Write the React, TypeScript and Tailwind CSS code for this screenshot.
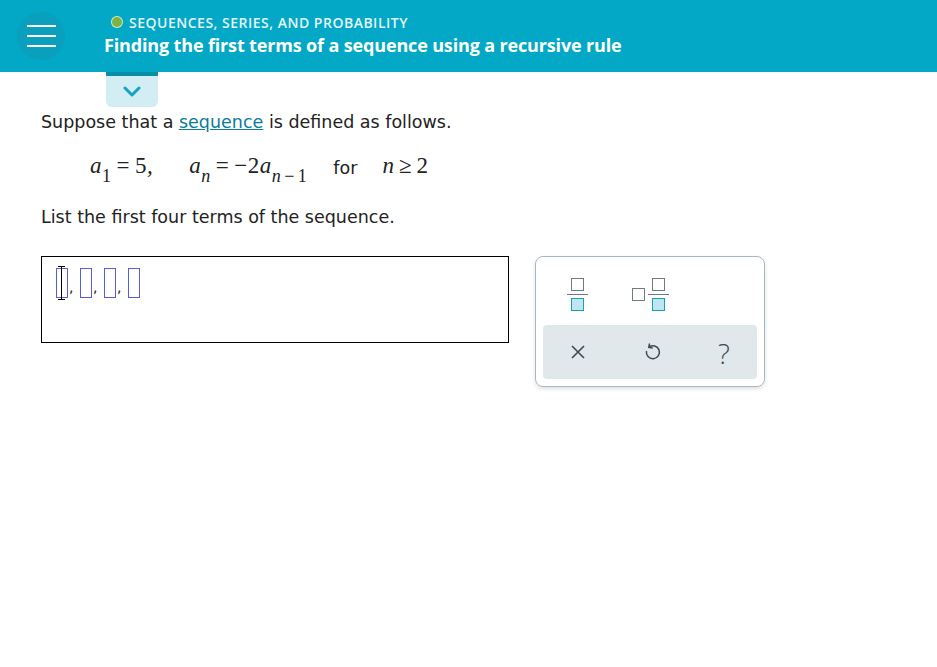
import React from 'react';

const Box = ({ filled }: { filled?: boolean }) => (
    <span className={`block w-[13px] h-[13px] border-[1.5px] ${filled ? 'border-[#14a0b5] bg-[#bfe6f0]' : 'border-[#6f7b80] bg-white'}`} />
);

const Frac = () => (
    <span className="flex flex-col items-center gap-[3px]">
        <Box />
        <span className="block w-[21px] h-[1.5px] bg-[#6f7b80]" />
        <Box filled />
    </span>
);

const Slot = ({ cursor }: { cursor?: boolean }) => (
    <span className="relative inline-block w-[12px] h-[30px] border border-[#5a5ae6]">
        {cursor && (
            <>
                <span className="absolute left-[4px] top-[-3px] w-[1px] h-[34px] bg-black" />
                <span className="absolute left-[1px] top-[-3px] w-[7px] h-[1px] bg-black" />
                <span className="absolute left-[1px] bottom-[-3px] w-[7px] h-[1px] bg-black" />
            </>
        )}
    </span>
);

const Comma = () => <span className="w-[12px] h-[30px] flex items-end text-[14px] leading-[22px] pl-[1px]">,</span>;

const Sub = ({ children }: { children: React.ReactNode }) => (
    <span className="relative top-[9px] text-[18px]">{children}</span>
);

const Op = ({ children }: { children: React.ReactNode }) => <span className="mx-[5px]">{children}</span>;

const App: React.FC = () => {
    return (
        <div className="w-[937px] h-[667px] bg-white relative overflow-hidden" style={{ fontFamily: '"DejaVu Sans", Verdana, sans-serif' }}>
            <header className="h-[72px] bg-[#02a8c6] flex items-center">
                <div className="ml-[17px] w-[48px] h-[48px] rounded-full bg-[#0aa0bd] flex flex-col items-center justify-center gap-[8px]">
                    <span className="block w-[29px] h-[2px] bg-white" />
                    <span className="block w-[29px] h-[2px] bg-white" />
                    <span className="block w-[29px] h-[2px] bg-white" />
                </div>
                <div className="ml-[39px] mt-[-5px] flex flex-col" style={{ fontFamily: '"Open Sans", Lato, sans-serif' }}>
                    <div className="flex items-center gap-[6px] ml-[7px]">
                        <span className="w-[12px] h-[12px] rounded-full bg-[#7cb342] border border-white/70" />
                        <span className="text-[14px] font-semibold text-[#e3f6fa] tracking-[0.5px]">SEQUENCES, SERIES, AND PROBABILITY</span>
                    </div>
                    <div className="text-[18px] font-bold text-white leading-[22px] mt-[1px] tracking-[-0.15px]">Finding the first terms of a sequence using a recursive rule</div>
                </div>
            </header>
            <div className="ml-[106px] w-[52px] h-[35px] bg-[#d3edf4] rounded-b-[6px] border-t-[4px] border-[#0a8da7] flex items-center justify-center">
                <svg width="20" height="12" viewBox="0 0 20 12"><path d="M3 2 L10 9 L17 2" fill="none" stroke="#15a3c3" strokeWidth="3" strokeLinecap="round" strokeLinejoin="round" /></svg>
            </div>
            <div className="pl-[41px] text-[17.5px] text-[#222]">
                <p className="mt-[4px] leading-[22px]">Suppose that a <span className="text-[#0b7c99] underline">sequence</span> is defined as follows.</p>
                <div className="mt-[19px] h-[40px] flex items-start pl-[49px] text-[23px] leading-[28px]" style={{ fontFamily: '"Liberation Serif", "Times New Roman", serif' }}>
                    <span className="tracking-[0.5px]"><i>a</i><Sub>1</Sub><Op>=</Op>5<i>,</i></span>
                    <span className="ml-[36px] tracking-[0.5px]"><i>a</i><Sub><i>n</i></Sub><Op>=</Op>−2<i>a</i><Sub><i>n</i><span className="mx-[3px]">−</span>1</Sub></span>
                    <span className="ml-[26px] text-[17.5px] mt-[2px]" style={{ fontFamily: '"DejaVu Sans", Verdana, sans-serif' }}>for</span>
                    <span className="ml-[25px]"><i>n</i><Op>≥</Op>2</span>
                </div>
                <p className="mt-[14px] leading-[22px]">List the first four terms of the sequence.</p>
                <div className="mt-[28px] flex items-start gap-[26px]">
                    <div className="w-[468px] h-[87px] border border-black pt-[11px] pl-[14px] flex items-start">
                        <Slot cursor /><Comma />
                        <Slot /><Comma />
                        <Slot /><Comma />
                        <Slot />
                    </div>
                    <div className="w-[230px] h-[131px] border border-[#a9b8c0] rounded-[8px] shadow-[0_2px_4px_rgba(0,0,0,0.12)] p-[7px] flex flex-col">
                        <div className="h-[61px] flex items-center pl-[24px] gap-[44px]">
                            <Frac />
                            <span className="flex items-center gap-[3px]"><Box /><Frac /></span>
                        </div>
                        <div className="h-[54px] bg-[#e1e8eb] rounded-[4px] flex items-center text-[#3c4a52]">
                            <span className="ml-[27px]">
                                <svg width="16" height="16" viewBox="0 0 16 16"><path d="M2 2 L14 14 M14 2 L2 14" stroke="#3c4a52" strokeWidth="1.6" /></svg>
                            </span>
                            <span className="ml-[57px]">
                                <svg width="18" height="20" viewBox="0 0 18 20"><path d="M6 5 A6.5 6.5 0 1 1 3.5 9" fill="none" stroke="#3c4a52" strokeWidth="1.5" /><path d="M6.5 1.5 L5.8 5.4 L9.8 6" fill="none" stroke="#3c4a52" strokeWidth="1.5" /></svg>
                            </span>
                            <span className="ml-[57px] text-[28px] font-light leading-none mt-[2px]" style={{ fontFamily: '"Open Sans", sans-serif' }}>?</span>
                        </div>
                    </div>
                </div>
            </div>
        </div>
    );
};

export default App;
